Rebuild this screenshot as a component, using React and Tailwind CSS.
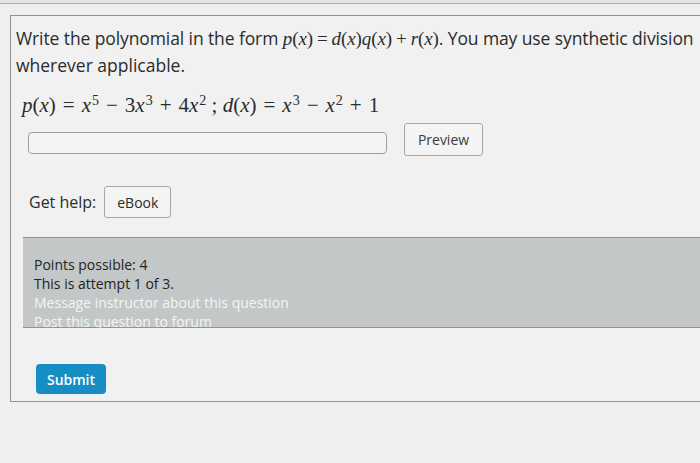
import React from "react";

const SERIF = { fontFamily: "'Liberation Serif', 'DejaVu Serif', serif" };
const M = ({ children }) => (
  <span className="italic" style={SERIF}>{children}</span>
);
const R = ({ children }) => <span style={SERIF}>{children}</span>;
const Op = ({ children }) => (
  <span className="mx-[7px]" style={SERIF}>{children}</span>
);
const Op2 = ({ children }) => (
  <span className="mx-[4px]" style={SERIF}>{children}</span>
);
const Sup = ({ children }) => (
  <sup className="text-[14px] ml-[1px]" style={SERIF}>{children}</sup>
);
const Fn = ({ f }) => (
  <>
    <M>{f}</M>
    <R>(</R>
    <M>x</M>
    <R>)</R>
  </>
);

export default function App() {
  return (
    <div
      className="w-[700px] h-[463px] overflow-hidden bg-[#eef0ef] text-[#2a2c2c]"
      style={{ fontFamily: "'Open Sans', 'Noto Sans', sans-serif" }}
    >
      <div className="h-[4px] bg-[#e4e6e5] border-b border-[#a9adad]"></div>
      <div className="pt-[11px] pl-[10px]">
        <div className="border-l border-t border-b border-[#8f9494] h-[387px] pl-[5px] pt-[9px] bg-[#f0f1f0]">
          <div className="text-[17.5px] leading-[27px] whitespace-nowrap tracking-[-0.1px]">
            Write the polynomial in the form{" "}
            <span className="text-[19px]">
              <Fn f="p" />
              <Op2>=</Op2>
              <Fn f="d" />
              <Fn f="q" />
              <Op2>+</Op2>
              <Fn f="r" />
            </span>
            . You may use synthetic division
          </div>
          <div className="text-[17.5px] leading-[27px]">wherever applicable.</div>

          <div className="mt-[12px] pl-[6px] text-[21px] leading-[26px] whitespace-nowrap">
            <Fn f="p" />
            <Op>=</Op>
            <M>x</M>
            <Sup>5</Sup>
            <Op>−</Op>
            <R>3</R>
            <M>x</M>
            <Sup>3</Sup>
            <Op>+</Op>
            <R>4</R>
            <M>x</M>
            <Sup>2</Sup>
            <R>&nbsp;; </R>
            <Fn f="d" />
            <Op>=</Op>
            <M>x</M>
            <Sup>3</Sup>
            <Op>−</Op>
            <M>x</M>
            <Sup>2</Sup>
            <Op>+</Op>
            <R>1</R>
          </div>

          <div className="flex items-start mt-[5px] pl-[12px]">
            <div className="w-[359px] h-[22px] border border-[#9aa0a0] rounded-[4px] bg-[#f3f4f3] mt-[9px]"></div>
            <div className="ml-[17px] w-[79px] h-[33px] border border-[#a3a8a8] rounded-[3px] flex items-center justify-center text-[14px] text-[#3a3d3d] bg-[#f3f4f3]">
              Preview
            </div>
          </div>

          <div className="flex items-center mt-[30px] pl-[13px]">
            <span className="text-[16px]">Get help:</span>
            <div className="ml-[8px] w-[67px] h-[32px] border border-[#a3a8a8] rounded-[3px] flex items-center justify-center text-[14px] bg-[#f3f4f3]">
              eBook
            </div>
          </div>

          <div className="mt-[19px] ml-[7px] h-[91px] bg-[#c3c7c7] border-t border-b border-[#8f9595] pl-[11px] pt-[17px] text-[14px] leading-[19px]">
            <div className="text-[#1f2222]">Points possible: 4</div>
            <div className="text-[#1f2222]">This is attempt 1 of 3.</div>
            <div className="text-[#f3f5f5]">Message instructor about this question</div>
            <div className="text-[#f3f5f5]">Post this question to forum</div>
          </div>

          <div className="mt-[36px] ml-[20px] w-[70px] h-[30px] bg-[#168ec4] rounded-[4px] flex items-center justify-center text-white text-[14px] font-semibold">
            Submit
          </div>
        </div>
      </div>
    </div>
  );
}
